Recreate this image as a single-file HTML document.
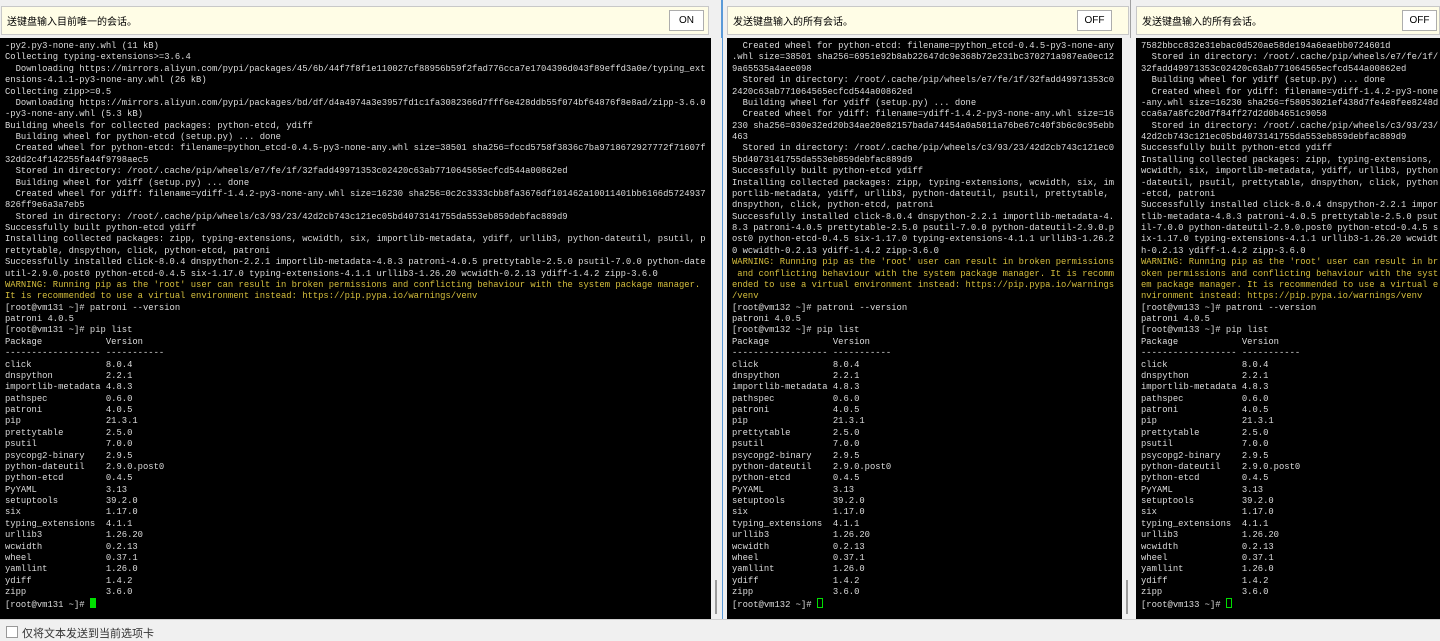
<!DOCTYPE html>
<html><head><meta charset="utf-8"><style>
*{margin:0;padding:0;box-sizing:border-box}
body{width:1440px;height:632px;background:#f0f0f0;position:relative;overflow:hidden;font-family:"Liberation Sans","Noto Sans CJK SC",sans-serif}
.pane{position:absolute;top:0;height:619px;background:#f0f0f0}
.bar{position:absolute;top:6px;height:29px;background:#fffde6;border:1px solid #c8c8c8;font-size:10px;color:#000;padding:6px 0 0 5px}
.btn{position:absolute;top:3px;width:35px;height:21px;background:#fff;border:1px solid #adadad;font-size:10px;text-align:center;line-height:19px}
.term{position:absolute;top:38px;bottom:0;background:#000;overflow:hidden}
pre{font-family:"Liberation Mono",monospace;font-size:8.85px;line-height:11.38px;color:#dcdcdc;padding:3px 0 0 5px;white-space:pre}
.w{color:#d6bf3e}
.cur{display:inline-block;width:6px;height:10px;vertical-align:-1px}
.sb{position:absolute;top:38px;bottom:0;width:11px;background:#f0f0f0}
.th{position:absolute;left:4px;width:2px;background:#9a9a9a}
</style></head><body>
<div class="pane" style="left:0;width:723px;border-right:2px solid #5a9ad8">
 <div class="bar" style="left:1px;width:708px">送键盘输入目前唯一的会话。<div class="btn" style="left:667px">ON</div></div>
 <div class="term" style="left:0;width:711px"><pre>-py2.py3-none-any.whl (11 kB)
Collecting typing-extensions>=3.6.4
  Downloading https://mirrors.aliyun.com/pypi/packages/45/6b/44f7f8f1e110027cf88956b59f2fad776cca7e1704396d043f89effd3a0e/typing_ext
ensions-4.1.1-py3-none-any.whl (26 kB)
Collecting zipp>=0.5
  Downloading https://mirrors.aliyun.com/pypi/packages/bd/df/d4a4974a3e3957fd1c1fa3082366d7fff6e428ddb55f074bf64876f8e8ad/zipp-3.6.0
-py3-none-any.whl (5.3 kB)
Building wheels for collected packages: python-etcd, ydiff
  Building wheel for python-etcd (setup.py) ... done
  Created wheel for python-etcd: filename=python_etcd-0.4.5-py3-none-any.whl size=38501 sha256=fccd5758f3836c7ba9718672927772f71607f
32dd2c4f142255fa44f9798aec5
  Stored in directory: /root/.cache/pip/wheels/e7/fe/1f/32fadd49971353c02420c63ab771064565ecfcd544a00862ed
  Building wheel for ydiff (setup.py) ... done
  Created wheel for ydiff: filename=ydiff-1.4.2-py3-none-any.whl size=16230 sha256=0c2c3333cbb8fa3676df101462a10011401bb6166d5724937
826ff9e6a3a7eb5
  Stored in directory: /root/.cache/pip/wheels/c3/93/23/42d2cb743c121ec05bd4073141755da553eb859debfac889d9
Successfully built python-etcd ydiff
Installing collected packages: zipp, typing-extensions, wcwidth, six, importlib-metadata, ydiff, urllib3, python-dateutil, psutil, p
rettytable, dnspython, click, python-etcd, patroni
Successfully installed click-8.0.4 dnspython-2.2.1 importlib-metadata-4.8.3 patroni-4.0.5 prettytable-2.5.0 psutil-7.0.0 python-date
util-2.9.0.post0 python-etcd-0.4.5 six-1.17.0 typing-extensions-4.1.1 urllib3-1.26.20 wcwidth-0.2.13 ydiff-1.4.2 zipp-3.6.0
<span class="w">WARNING: Running pip as the 'root' user can result in broken permissions and conflicting behaviour with the system package manager.
It is recommended to use a virtual environment instead: https://pip.pypa.io/warnings/venv</span>
[root@vm131 ~]# patroni --version
patroni 4.0.5
[root@vm131 ~]# pip list
Package            Version
------------------ -----------
click              8.0.4
dnspython          2.2.1
importlib-metadata 4.8.3
pathspec           0.6.0
patroni            4.0.5
pip                21.3.1
prettytable        2.5.0
psutil             7.0.0
psycopg2-binary    2.9.5
python-dateutil    2.9.0.post0
python-etcd        0.4.5
PyYAML             3.13
setuptools         39.2.0
six                1.17.0
typing_extensions  4.1.1
urllib3            1.26.20
wcwidth            0.2.13
wheel              0.37.1
yamllint           1.26.0
ydiff              1.4.2
zipp               3.6.0
[root@vm131 ~]# <span class="cur" style="background:#00e000"></span></pre></div>
 <div class="sb" style="left:711px"><div class="th" style="top:542px;height:34px"></div></div>
</div>
<div class="pane" style="left:727px;width:404px;border-right:1px solid #a0a0a0">
 <div class="bar" style="left:0;width:402px">发送键盘输入的所有会话。<div class="btn" style="left:349px">OFF</div></div>
 <div class="term" style="left:0;width:395px"><pre>  Created wheel for python-etcd: filename=python_etcd-0.4.5-py3-none-any
.whl size=38501 sha256=6951e92b8ab22647dc9e368b72e231bc370271a987ea0ec12
9a65535a4aee098
  Stored in directory: /root/.cache/pip/wheels/e7/fe/1f/32fadd49971353c0
2420c63ab771064565ecfcd544a00862ed
  Building wheel for ydiff (setup.py) ... done
  Created wheel for ydiff: filename=ydiff-1.4.2-py3-none-any.whl size=16
230 sha256=030e32ed20b34ae20e82157bada74454a0a5011a76be67c40f3b6c0c95ebb
463
  Stored in directory: /root/.cache/pip/wheels/c3/93/23/42d2cb743c121ec0
5bd4073141755da553eb859debfac889d9
Successfully built python-etcd ydiff
Installing collected packages: zipp, typing-extensions, wcwidth, six, im
portlib-metadata, ydiff, urllib3, python-dateutil, psutil, prettytable,
dnspython, click, python-etcd, patroni
Successfully installed click-8.0.4 dnspython-2.2.1 importlib-metadata-4.
8.3 patroni-4.0.5 prettytable-2.5.0 psutil-7.0.0 python-dateutil-2.9.0.p
ost0 python-etcd-0.4.5 six-1.17.0 typing-extensions-4.1.1 urllib3-1.26.2
0 wcwidth-0.2.13 ydiff-1.4.2 zipp-3.6.0
<span class="w">WARNING: Running pip as the 'root' user can result in broken permissions
 and conflicting behaviour with the system package manager. It is recomm
ended to use a virtual environment instead: https://pip.pypa.io/warnings
/venv</span>
[root@vm132 ~]# patroni --version
patroni 4.0.5
[root@vm132 ~]# pip list
Package            Version
------------------ -----------
click              8.0.4
dnspython          2.2.1
importlib-metadata 4.8.3
pathspec           0.6.0
patroni            4.0.5
pip                21.3.1
prettytable        2.5.0
psutil             7.0.0
psycopg2-binary    2.9.5
python-dateutil    2.9.0.post0
python-etcd        0.4.5
PyYAML             3.13
setuptools         39.2.0
six                1.17.0
typing_extensions  4.1.1
urllib3            1.26.20
wcwidth            0.2.13
wheel              0.37.1
yamllint           1.26.0
ydiff              1.4.2
zipp               3.6.0
[root@vm132 ~]# <span class="cur" style="border:1px solid #00e000"></span></pre></div>
 <div class="sb" style="left:395px"><div class="th" style="top:542px;height:34px"></div></div>
</div>
<div class="pane" style="left:1136px;width:304px">
 <div class="bar" style="left:0;width:304px">发送键盘输入的所有会话。<div class="btn" style="left:265px">OFF</div></div>
 <div class="term" style="left:0;width:304px"><pre>7582bbcc832e31ebac0d520ae58de194a6eaebb0724601d
  Stored in directory: /root/.cache/pip/wheels/e7/fe/1f/
32fadd49971353c02420c63ab771064565ecfcd544a00862ed
  Building wheel for ydiff (setup.py) ... done
  Created wheel for ydiff: filename=ydiff-1.4.2-py3-none
-any.whl size=16230 sha256=f58053021ef438d7fe4e8fee8248d
cca6a7a8fc20d7f84ff27d2d0b4651c9058
  Stored in directory: /root/.cache/pip/wheels/c3/93/23/
42d2cb743c121ec05bd4073141755da553eb859debfac889d9
Successfully built python-etcd ydiff
Installing collected packages: zipp, typing-extensions,
wcwidth, six, importlib-metadata, ydiff, urllib3, python
-dateutil, psutil, prettytable, dnspython, click, python
-etcd, patroni
Successfully installed click-8.0.4 dnspython-2.2.1 impor
tlib-metadata-4.8.3 patroni-4.0.5 prettytable-2.5.0 psut
il-7.0.0 python-dateutil-2.9.0.post0 python-etcd-0.4.5 s
ix-1.17.0 typing-extensions-4.1.1 urllib3-1.26.20 wcwidt
h-0.2.13 ydiff-1.4.2 zipp-3.6.0
<span class="w">WARNING: Running pip as the 'root' user can result in br
oken permissions and conflicting behaviour with the syst
em package manager. It is recommended to use a virtual e
nvironment instead: https://pip.pypa.io/warnings/venv</span>
[root@vm133 ~]# patroni --version
patroni 4.0.5
[root@vm133 ~]# pip list
Package            Version
------------------ -----------
click              8.0.4
dnspython          2.2.1
importlib-metadata 4.8.3
pathspec           0.6.0
patroni            4.0.5
pip                21.3.1
prettytable        2.5.0
psutil             7.0.0
psycopg2-binary    2.9.5
python-dateutil    2.9.0.post0
python-etcd        0.4.5
PyYAML             3.13
setuptools         39.2.0
six                1.17.0
typing_extensions  4.1.1
urllib3            1.26.20
wcwidth            0.2.13
wheel              0.37.1
yamllint           1.26.0
ydiff              1.4.2
zipp               3.6.0
[root@vm133 ~]# <span class="cur" style="border:1px solid #00e000"></span></pre></div>
</div>
<div style="position:absolute;left:0;top:619px;width:1440px;height:13px;background:#f0f0f0;border-top:1px solid #d0d0d0">
 <div style="position:absolute;left:6px;top:6px;width:12px;height:12px;border:1px solid #999;background:#fff"></div>
 <div style="position:absolute;left:22px;top:5px;font-size:11px;color:#333">仅将文本发送到当前选项卡</div>
</div>
</body></html>
